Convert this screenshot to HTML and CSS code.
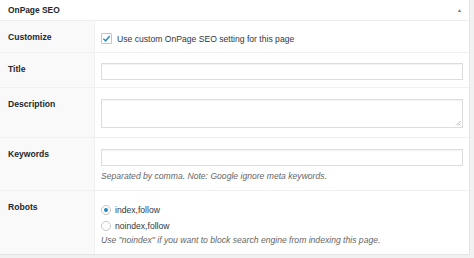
FILE: index.html
```html
<!DOCTYPE html>
<html lang="en">
<head>
  <meta charset="UTF-8">
  <meta name="viewport" content="width=device-width, initial-scale=1.0">
  <link rel="stylesheet" href="styles.css">
  <title>OnPage SEO</title>
</head>
<body>
  <div class="postbox">
    <div class="postbox-head">
      <h2>OnPage SEO</h2>
      <span class="toggle">&#9650;</span>
    </div>

    <div class="form-table">
      <div class="row row-customize">
        <div class="label">Customize</div>
        <div class="field">
          <label class="check">
            <span class="checkbox">
              <svg viewBox="0 0 10 10" width="9" height="9"><path d="M1.5 5.2 L4 7.6 L8.6 2.2" fill="none" stroke="#2c8dc6" stroke-width="1.6"/></svg>
            </span>
            Use custom OnPage SEO setting for this page
          </label>
        </div>
      </div>

      <div class="row row-title">
        <div class="label">Title</div>
        <div class="field">
          <div class="input"></div>
        </div>
      </div>

      <div class="row row-desc">
        <div class="label">Description</div>
        <div class="field">
          <div class="input textarea">
            <svg class="grip" viewBox="0 0 6 6" width="6" height="6"><path d="M5.5 1 L1 5.5 M5.5 3.5 L3.5 5.5" stroke="#aaa" stroke-width="0.8"/></svg>
          </div>
        </div>
      </div>

      <div class="row row-keywords">
        <div class="label">Keywords</div>
        <div class="field">
          <div class="input"></div>
          <p class="help">Separated by comma. Note: Google ignore meta keywords.</p>
        </div>
      </div>

      <div class="row row-robots">
        <div class="label">Robots</div>
        <div class="field">
          <label class="radio"><span class="dot checked"></span>index,follow</label>
          <label class="radio"><span class="dot"></span>noindex,follow</label>
          <p class="help">Use "noindex" if you want to block search engine from indexing this page.</p>
        </div>
      </div>
    </div>
  </div>
</body>
</html>
```

FILE: styles.css
```css
html, body {
  margin: 0;
  background-color: #f1f1f1;
  font-family: "Liberation Sans", Arial, Helvetica, sans-serif;
  font-size: 8.6px;
  color: #23282d;
}

.postbox {
  width: 470px;
  height: 255px;
  box-sizing: border-box;
  background-color: #fff;
  border-right: 1px solid #e5e5e5;
  border-bottom: 1px solid #e5e5e5;
  overflow: hidden;
}

.postbox-head {
  height: 21px;
  box-sizing: border-box;
  border-bottom: 1px solid #eee;
  display: flex;
  align-items: center;
  justify-content: space-between;
  padding: 0 8px;
}

.postbox-head h2 {
  margin: 0;
  font-size: 8.4px;
  font-weight: bold;
  color: #23282d;
}

.toggle {
  font-size: 5px;
  color: #72777c;
  margin-right: -1px;
}

.form-table {
  display: flex;
  flex-direction: column;
}

.row {
  display: grid;
  grid-template-columns: 95px 1fr;
  border-bottom: 1px solid #f0f0f0;
  box-sizing: border-box;
}

.row:last-child {
  border-bottom: none;
}

.row-customize { height: 32px; }
.row-title { height: 35px; }
.row-desc { height: 50px; }
.row-keywords { height: 53px; }
.row-robots { height: 63px; }

.label {
  background-color: #f9f9f9;
  border-right: 1px solid #f0f0f0;
  padding: 11px 0 0 8px;
  font-weight: bold;
  font-size: 8.6px;
  color: #23282d;
}

.field {
  padding: 10px 6px 0 6px;
}

.check {
  display: flex;
  align-items: center;
  gap: 5px;
  margin-top: 2px;
  color: #32373c;
}

.checkbox {
  width: 9px;
  height: 9px;
  border: 1px solid #c5c5c5;
  border-radius: 1px;
  background-color: #fff;
  display: flex;
  align-items: center;
  justify-content: center;
}

.input {
  height: 17px;
  box-sizing: border-box;
  border: 1px solid #ddd;
  box-shadow: inset 0 1px 1px rgba(0, 0, 0, 0.05);
  background-color: #fff;
}

.row-desc .field,
.row-keywords .field {
  padding-top: 11px;
}

.textarea {
  height: 29px;
  position: relative;
}

.grip {
  position: absolute;
  right: 1px;
  bottom: 1px;
}

.help {
  margin: 5px 0 0;
  font-style: italic;
  font-size: 8.6px;
  color: #666;
}

.row-robots .field {
  padding-top: 12px;
}

.radio {
  display: flex;
  align-items: center;
  gap: 4px;
  height: 14px;
  margin-bottom: 2px;
  color: #32373c;
}

.dot {
  width: 8px;
  height: 8px;
  border: 1px solid #c5c5c5;
  border-radius: 50%;
  background-color: #fff;
  display: flex;
  align-items: center;
  justify-content: center;
}

.dot.checked::after {
  content: "";
  width: 4px;
  height: 4px;
  border-radius: 50%;
  background-color: #1e8cbe;
}

.row-robots .help {
  margin-top: 2px;
}
```
